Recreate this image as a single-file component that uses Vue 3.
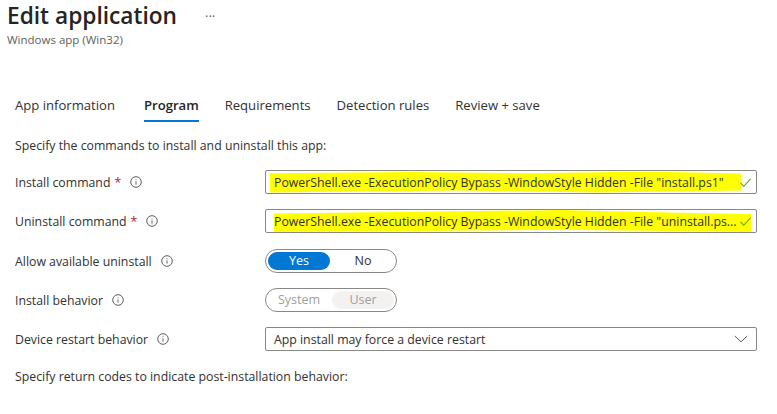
<script setup>
const tabs = [
  { name: 'App information', active: false },
  { name: 'Program', active: true },
  { name: 'Requirements', active: false },
  { name: 'Detection rules', active: false },
  { name: 'Review + save', active: false }
]
</script>

<template>
  <div class="page">
    <header class="head">
      <div class="title-row">
        <h1 class="title">Edit application</h1>
        <span class="more">···</span>
      </div>
      <div class="subtitle">Windows app (Win32)</div>
    </header>

    <nav class="tabs">
      <span v-for="t in tabs" :key="t.name" class="tab" :class="{ active: t.active }">{{ t.name }}</span>
    </nav>

    <p class="note first">Specify the commands to install and uninstall this app:</p>

    <div class="form">
      <div class="row">
        <div class="label"><span>Install command</span><b class="req">*</b>
          <svg class="info" viewBox="0 0 12 12"><circle cx="6" cy="6" r="5.3"/><path d="M6 5.4v3.2M6 3.4v.9"/></svg>
        </div>
        <div class="field">
          <span class="mark mark-a">PowerShell.exe -ExecutionPolicy Bypass -WindowStyle Hidden -File "install.ps1"</span>
          <svg class="check" viewBox="0 0 14 12"><path d="M1.5 6.5l3.6 3.6L12.5 2"/></svg>
        </div>
      </div>
      <div class="row">
        <div class="label"><span>Uninstall command</span><b class="req">*</b>
          <svg class="info" viewBox="0 0 12 12"><circle cx="6" cy="6" r="5.3"/><path d="M6 5.4v3.2M6 3.4v.9"/></svg>
        </div>
        <div class="field">
          <span class="mark mark-b">PowerShell.exe -ExecutionPolicy Bypass -WindowStyle Hidden -File "uninstall.ps...</span>
          <svg class="check" viewBox="0 0 14 12"><path d="M1.5 6.5l3.6 3.6L12.5 2"/></svg>
        </div>
      </div>
      <div class="row spaced">
        <div class="label"><span>Allow available uninstall</span>
          <svg class="info" viewBox="0 0 12 12"><circle cx="6" cy="6" r="5.3"/><path d="M6 5.4v3.2M6 3.4v.9"/></svg>
        </div>
        <div class="toggle">
          <span class="opt on">Yes</span>
          <span class="opt">No</span>
        </div>
      </div>
      <div class="row">
        <div class="label"><span>Install behavior</span>
          <svg class="info" viewBox="0 0 12 12"><circle cx="6" cy="6" r="5.3"/><path d="M6 5.4v3.2M6 3.4v.9"/></svg>
        </div>
        <div class="toggle disabled">
          <span class="opt">System</span>
          <span class="opt on">User</span>
        </div>
      </div>
      <div class="row">
        <div class="label"><span>Device restart behavior</span>
          <svg class="info" viewBox="0 0 12 12"><circle cx="6" cy="6" r="5.3"/><path d="M6 5.4v3.2M6 3.4v.9"/></svg>
        </div>
        <div class="field select">
          <span>App install may force a device restart</span>
          <svg class="chev" viewBox="0 0 14 8"><path d="M.8 1l6.2 5.8L13.2 1"/></svg>
        </div>
      </div>
    </div>

    <p class="note last">Specify return codes to indicate post-installation behavior:</p>
  </div>
</template>

<style scoped>
.page {
  width: 777px;
  height: 414px;
  overflow: hidden;
  background: #fff;
  color: #323130;
  font-family: "Open Sans", "Noto Sans", sans-serif;
  font-size: 12.3px;
  box-sizing: border-box;
  padding: 0 20px 0 15px;
}
.head { margin-left: -8px; height: 47px; }
.title-row { display: flex; align-items: center; height: 32px; }
.title {
  margin: 0;
  font-size: 22.7px;
  font-weight: 600;
  line-height: 32px;
  color: #252423;
}
.more {
  margin-left: 28px;
  font-size: 13px;
  color: #605e5c;
  line-height: 32px;
}
.subtitle { margin-top: 1px; font-size: 11.5px; color: #605e5c; line-height: 14px; }
.tabs {
  display: flex;
  gap: 26px;
  margin-top: 48px;
  height: 27px;
  font-size: 13.1px;
}
.tab { box-sizing: border-box; height: 27px; line-height: 21px; }
.tab:first-child { margin-right: 3px; }
.tab.active {
  font-weight: 600;
  color: #252423;
  border-bottom: 2px solid #0078d4;
}
.note { margin: 0; line-height: 18px; }
.note.first { margin-top: 15px; }
.note.last { margin-top: 17px; }
.form { display: flex; flex-direction: column; gap: 15px; margin-top: 15px; }
.row { display: flex; align-items: center; height: 24px; }
.row.spaced { margin-top: 1px; }
.label { width: 250px; flex: none; display: flex; align-items: center; }
.req { color: #a4262c; font-weight: 400; margin-left: 4px; }
.info {
  width: 12px;
  height: 12px;
  margin-left: 9px;
  fill: none;
  stroke: #605e5c;
  stroke-width: 1;
}
.field {
  position: relative;
  flex: none;
  box-sizing: border-box;
  width: 492px;
  height: 24px;
  border: 1px solid #8a8886;
  border-radius: 2px;
  padding: 0 8px;
  display: flex;
  align-items: center;
  justify-content: space-between;
  white-space: nowrap;
}
.mark {
  background: #ffff00;
  line-height: 17px;
  color: #323130;
}
.mark-a {
  width: 467px;
  margin-left: -4px;
  padding: 2px 0 2px 4px;
  flex: none;
  clip-path: polygon(0 8%, 30% 2%, 55% 8%, 80% 0, 100% 10%, 100% 90%, 70% 100%, 40% 90%, 0 100%);
}
.mark-b {
  width: 477px;
  padding: 3px 0 2px 0;
  flex: none;
  clip-path: polygon(0 16%, 30% 8%, 60% 0, 85% 12%, 100% 18%, 100% 100%, 60% 90%, 30% 96%, 0 100%);
}
.check {
  position: absolute;
  right: 4px;
  top: 6px;
  width: 13px;
  height: 11px;
  fill: none;
  stroke: #5fa800;
  stroke-width: 1.2;
}
.toggle {
  box-sizing: border-box;
  width: 132px;
  height: 24px;
  border: 1px solid #8a8886;
  border-radius: 12px;
  padding: 2px;
  display: flex;
  gap: 2px;
}
.opt {
  flex: 1;
  text-align: center;
  line-height: 18px;
  border-radius: 9px;
  font-size: 12.5px;
  color: #323130;
}
.opt.on { background: #0078d4; color: #fff; }
.toggle.disabled .opt { color: #a19f9d; }
.toggle.disabled .opt.on { background: #f3f2f1; color: #a19f9d; }
.chev {
  width: 14px;
  height: 8px;
  fill: none;
  stroke: #605e5c;
  stroke-width: 1;
}
</style>
